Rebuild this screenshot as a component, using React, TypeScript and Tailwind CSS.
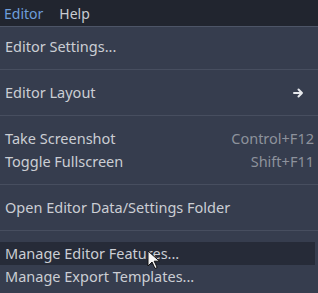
import { Fragment } from "react";

type Item =
  | { kind: "item"; label: string; shortcut?: string; submenu?: boolean; hover?: boolean }
  | { kind: "sep" };

const items: Item[] = [
  { kind: "item", label: "Editor Settings..." },
  { kind: "sep" },
  { kind: "item", label: "Editor Layout", submenu: true },
  { kind: "sep" },
  { kind: "item", label: "Take Screenshot", shortcut: "Control+F12" },
  { kind: "item", label: "Toggle Fullscreen", shortcut: "Shift+F11" },
  { kind: "sep" },
  { kind: "item", label: "Open Editor Data/Settings Folder" },
  { kind: "sep" },
  { kind: "item", label: "Manage Editor Features...", hover: true },
  { kind: "item", label: "Manage Export Templates..." },
];

function ArrowRight() {
  return (
    <svg width="11" height="10" viewBox="0 0 11 10" className="block">
      <path d="M1 5h8M5.5 1.5L9 5l-3.5 3.5" fill="none" stroke="#e6e8ec" strokeWidth="2" strokeLinecap="round" strokeLinejoin="round" />
    </svg>
  );
}

function Cursor() {
  return (
    <svg width="14" height="20" viewBox="0 0 14 20" className="absolute left-[147px] top-[250px]">
      <path d="M1 1v15l4-4 3 6.5 2.2-1-3-6.3H12.5z" fill="#f4f4f4" stroke="#111" strokeWidth="1" strokeLinejoin="round" />
    </svg>
  );
}

export default function App() {
  return (
    <div
      className="relative w-[318px] h-[293px] overflow-hidden bg-[#363d4e] text-[14px]"
      style={{ fontFamily: '"Noto Sans", "Open Sans", sans-serif' }}
    >
      {/* barre de menu */}
      <div className="flex h-[27px] items-center gap-[16px] bg-[#21252f] px-[4px] border-b border-[#4d5567]">
        <span className="text-[#6e9edb]">Editor</span>
        <span className="text-[#c9ccd2]">Help</span>
      </div>

      <div className="pt-[8px] text-[14.5px]">
        {items.map((it, i) =>
          it.kind === "sep" ? (
            <div key={i} className="flex h-[23px] items-center">
              <div className="h-px w-full bg-[#474e5f]" />
            </div>
          ) : (
            <Fragment key={i}>
              <div
                className={`mr-[3px] flex h-[23px] items-center justify-between pl-[5px] pr-[1px] ${
                  it.hover ? "bg-[#262b38]" : ""
                }`}
              >
                <span className="text-[#cbced4]">{it.label}</span>
                {it.shortcut && <span className="text-[#8d929c]">{it.shortcut}</span>}
                {it.submenu && (
                  <span className="pr-[10px]">
                    <ArrowRight />
                  </span>
                )}
              </div>
            </Fragment>
          )
        )}
      </div>

      <Cursor />
    </div>
  );
}
